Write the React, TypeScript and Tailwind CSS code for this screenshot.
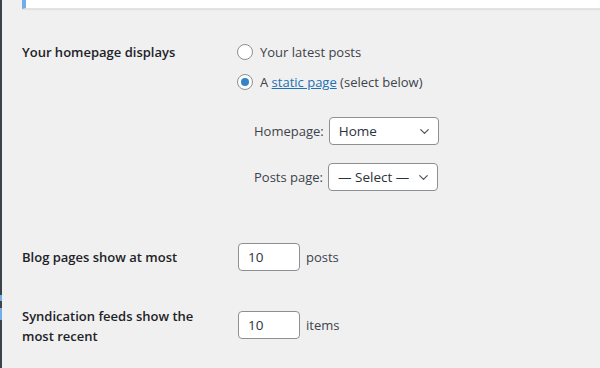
import { ChevronDown } from "lucide-react"

function Radio({ checked }: { checked?: boolean }) {
  return (
    <span className="w-4 h-4 rounded-full border border-[#8c8f94] bg-white flex items-center justify-center shrink-0">
      {checked && <span className="w-2 h-2 rounded-full bg-[#3582c4]" />}
    </span>
  )
}

function Select({ value, width }: { value: string; width: string }) {
  return (
    <div
      className={`${width} h-7 bg-white border border-[#8c8f94] rounded-[4px] flex items-center justify-between pl-[9px] pr-[6px] text-[13.5px] text-[#2c3338]`}
    >
      <span>{value}</span>
      <ChevronDown size={15} strokeWidth={2} className="text-[#50575e]" />
    </div>
  )
}

function NumberBox({ value }: { value: string }) {
  return (
    <div className="w-[62px] h-7 bg-white border border-[#8c8f94] rounded-[4px] flex items-center pl-[9px] text-[13.5px] text-[#2c3338]">
      {value}
    </div>
  )
}

export default function App() {
  return (
    <div
      className="w-[600px] h-[368px] bg-[#f0f0f1] flex overflow-hidden text-[13px] leading-5 text-[#3c434a]"
      style={{ fontFamily: '"Open Sans", "Noto Sans", sans-serif' }}
    >
      <div className="w-[2px] h-full bg-[#3c434a] flex flex-col">
        <div className="h-[295px]" />
        <div className="h-[6px] bg-[#72aee6]" />
        <div className="h-[7px]" />
        <div className="h-[12px] bg-[#72aee6]" />
      </div>

      <div className="flex-1 pl-5">
        <div className="h-[9px] bg-white border-l-4 border-[#72aee6] shadow-[0_1px_1px_rgba(0,0,0,0.06)] border-b border-b-[#e2e2e4]" />

        {/* homepage displays */}
        <div className="flex mt-[33px]">
          <div className="w-[215px] font-semibold text-[#1d2327]">Your homepage displays</div>
          <div className="flex flex-col">
            <div className="flex items-center gap-[7px]">
              <Radio />
              <span>Your latest posts</span>
            </div>
            <div className="flex items-center gap-[7px] mt-[10px]">
              <Radio checked />
              <span>
                A <span className="text-[#2271b1] underline">static page</span> (select below)
              </span>
            </div>
            <div className="flex flex-col pl-[17px] mt-[25px] gap-[18px]">
              <div className="flex items-center gap-[5px]">
                <span>Homepage:</span>
                <Select value="Home" width="w-[110px]" />
              </div>
              <div className="flex items-center gap-[5px]">
                <span>Posts page:</span>
                <Select value="— Select —" width="w-[110px]" />
              </div>
            </div>
          </div>
        </div>

        {/* blog pages */}
        <div className="flex items-center mt-[52px]">
          <div className="w-[216px] font-semibold text-[#1d2327]">Blog pages show at most</div>
          <NumberBox value="10" />
          <span className="ml-[6px]">posts</span>
        </div>

        {/* syndication */}
        <div className="flex mt-[35px]">
          <div className="w-[216px] font-semibold text-[#1d2327] pr-4">
            Syndication feeds show the most recent
          </div>
          <div className="flex items-center mt-[5px] h-7">
            <NumberBox value="10" />
            <span className="ml-[6px]">items</span>
          </div>
        </div>
      </div>
    </div>
  )
}
